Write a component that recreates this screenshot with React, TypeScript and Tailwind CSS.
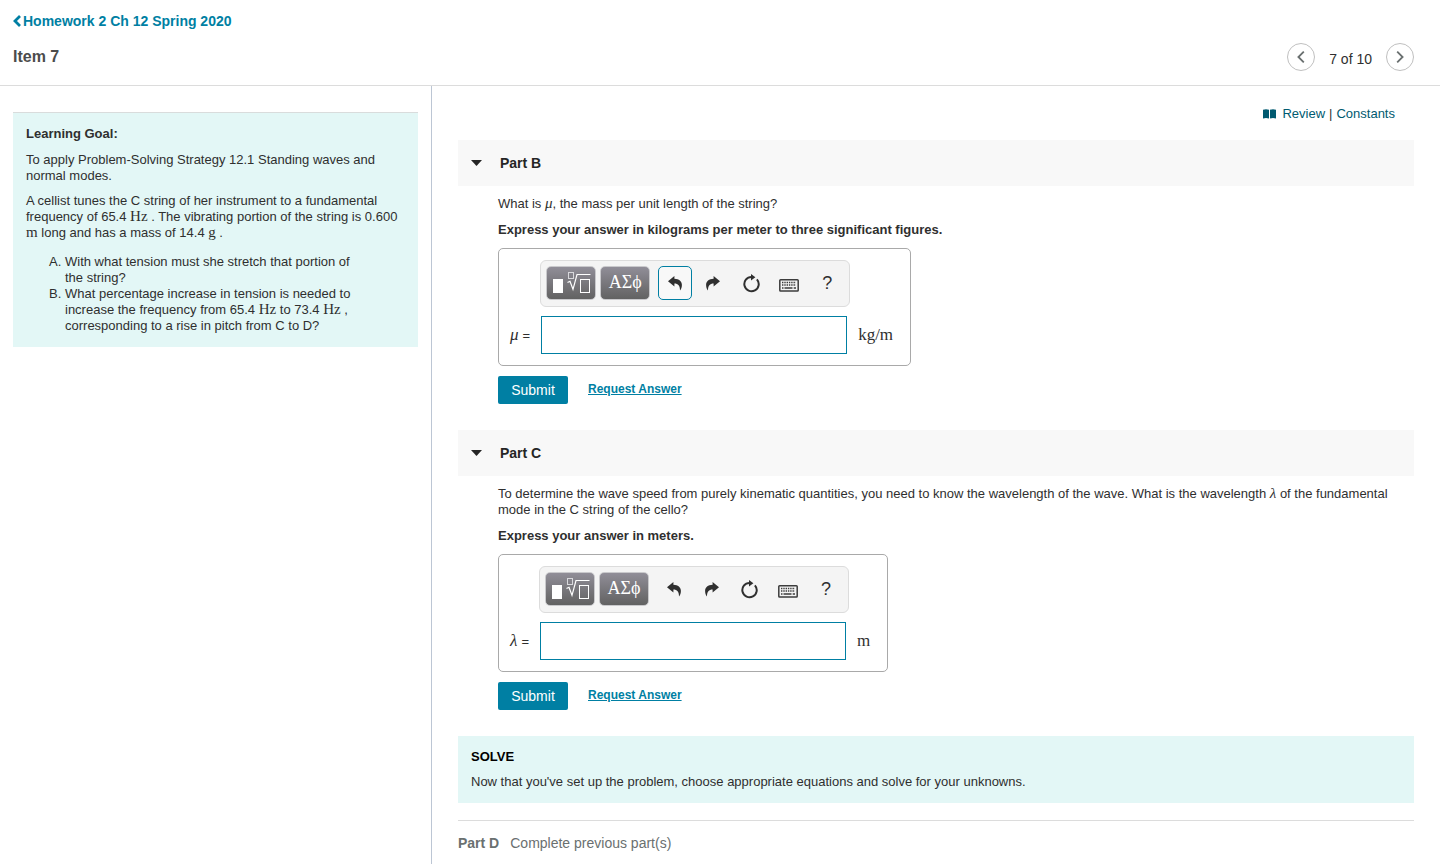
import React from 'react';
import clsx from 'clsx';

function ReplyArrow({ flipped = false }: { flipped?: boolean }) {
  return (
    <svg viewBox="0 0 14 15" className={clsx('h-[15px] w-[14px]', flipped && '-scale-x-100')} fill="#2f2f2f" aria-hidden="true">
      <path d="M0 5.2 6.4 0v2.800C11 2.800 13.900 5.600 13.900 9c0 2.300-.8 4.200-1.900 5.600C12.200 10 10 7.600 6.400 7.600v2.800z" />
    </svg>
  );
}

function ResetIcon() {
  return (
    <svg viewBox="0 0 17 19" className="h-[19px] w-[17px]" aria-hidden="true">
      <path d="M13.900 5.300A7.200 7.200 0 1 1 8.500 2.900" fill="none" stroke="#2f2f2f" strokeWidth="2" />
      <path d="M8 0 12.400 3.200 8 6.400z" fill="#2f2f2f" />
    </svg>
  );
}

function KeyboardIcon() {
  return (
    <svg viewBox="0 0 20 13" className="h-[13px] w-5" fill="none" stroke="#3c3c3c" aria-hidden="true">
      <rect x="0.8" y="0.8" width="18.400" height="11.200" rx="0.8" strokeWidth="1.500" />
      <path d="M3 3.500h14M3 6h14" strokeWidth="1.400" strokeDasharray="1.400 0.900" />
      <path d="M3 9h1.500M5.500 9h8M14.700 9H17" strokeWidth="1.400" />
    </svg>
  );
}

function TemplateIcon() {
  return (
    <svg viewBox="1 1 48 32" className="h-full w-full" fill="none" stroke="#fff" aria-hidden="true">
      <rect x="7" y="13" width="10" height="14" fill="#fff" stroke="none" />
      <rect x="22.500" y="6.500" width="5" height="6" stroke="#d8d8dc" />
      <path d="M21.500 16.500l2.500-1.200 3 8L31 8.500h13.500" strokeWidth="1.200" />
      <rect x="34.500" y="13.500" width="9" height="13" />
    </svg>
  );
}

function BookIcon() {
  return (
    <svg viewBox="0 0 13 10" className="h-[10px] w-[13px]" fill="#005a70" aria-hidden="true">
      <path d="M0 .7Q3 -.3 6 .7V9.500Q3 8.500 0 9.500zM7 .7Q10-.3 13 .7V9.500Q10 8.500 7 9.500z" />
    </svg>
  );
}

function Unit({ children }: { children: React.ReactNode }) {
  return <span className="font-['Liberation_Serif',serif] text-[15px] leading-none">{children}</span>;
}

function MathVar({ children }: { children: React.ReactNode }) {
  return <i className="font-['Liberation_Serif',serif] text-[15px] leading-none">{children}</i>;
}

const darkButton =
  "h-[34px] w-[50px] rounded-[5px] border border-[#c9c9cc] bg-linear-to-b from-[#918e98] to-[#626262] font-['Liberation_Serif',serif] text-lg leading-none text-white";
const toolButton = 'flex h-[34px] w-[34px] items-center justify-center rounded-[5px] border';

function Toolbar({ undoFocused }: { undoFocused?: boolean }) {
  return (
    <div className="flex gap-1 rounded-md border border-[#dcdcdc] bg-[#f4f4f4] px-[5px] pt-[5px] pb-[6px]">
      <button type="button" aria-label="Templates" className={darkButton}>
        <TemplateIcon />
      </button>
      <button type="button" aria-label="Symbols" className={clsx(darkButton, 'pb-0.5')}>
        ΑΣϕ
      </button>
      <button
        type="button"
        aria-label="Undo"
        className={clsx(toolButton, 'ml-1', undoFocused ? 'border-[#007fa3] bg-[#f8f8f8]' : 'border-transparent')}
      >
        <ReplyArrow />
      </button>
      <button type="button" aria-label="Redo" className={clsx(toolButton, 'border-transparent')}>
        <ReplyArrow flipped />
      </button>
      <button type="button" aria-label="Reset" className={clsx(toolButton, 'border-transparent')}>
        <ResetIcon />
      </button>
      <button type="button" aria-label="Keyboard shortcuts" className={clsx(toolButton, 'border-transparent pt-1')}>
        <KeyboardIcon />
      </button>
      <button type="button" aria-label="Help" className={clsx(toolButton, 'border-transparent text-lg')}>
        ?
      </button>
    </div>
  );
}

interface AnswerProps {
  id: string;
  symbol: string;
  unit: string;
  undoFocused?: boolean;
}

function AnswerForm({ id, symbol, unit, undoFocused }: AnswerProps) {
  return (
    <form onSubmit={(e) => e.preventDefault()}>
      <div className="grid w-fit grid-cols-[auto_auto_auto] items-center gap-y-[9px] rounded-[5px] border border-[#a9a9a9] py-[11px] pr-[17px] pl-[11px]">
        <div className="col-start-2">
          <Toolbar undoFocused={undoFocused} />
        </div>
        <label htmlFor={id} className="col-start-1 row-start-2 flex items-baseline gap-1 pr-[10px]">
          <i className="font-['Liberation_Serif',serif] text-[17px]">{symbol}</i> =
        </label>
        <div className="row-start-2 px-px">
          <input
            id={id}
            type="text"
            className="block h-[38px] w-[306px] border border-[#007fa3] bg-white px-2 text-base outline-none"
          />
        </div>
        <span className="row-start-2 pl-2 font-['Liberation_Serif',serif] text-[17px]">{unit}</span>
      </div>
      <div className="mt-[10px] flex items-center gap-5">
        <button type="submit" className="h-7 w-[70px] rounded-xs bg-[#007fa3] text-sm text-white">
          Submit
        </button>
        <a href="#request" className="pb-0.5 text-xs font-bold text-[#007fa3] underline">
          Request Answer
        </a>
      </div>
    </form>
  );
}

function Part({ title, children }: { title: string; children: React.ReactNode }) {
  return (
    <section className="mb-[26px]">
      <h2>
        <button type="button" className="flex h-[46px] w-full items-center gap-[18px] bg-[#f8f8f8] px-[13px] text-sm font-bold text-[#252525]">
          <svg viewBox="0 0 11 6" className="h-[6px] w-[11px]" fill="#252525" aria-hidden="true">
            <path d="M0 0h11L5.500 6z" />
          </svg>
          {title}
        </button>
      </h2>
      <div className="space-y-[10px] pt-[10px] pl-10">{children}</div>
    </section>
  );
}

const pagerButton = 'flex h-7 w-7 items-center justify-center rounded-full border border-[#c0c0c0]';

export default function App() {
  return (
    <div className="flex min-h-screen flex-col bg-white font-['Liberation_Sans',Arial,sans-serif] text-[13px] leading-4 text-[#2f2f2f]">
      <header className="flex items-end justify-between border-b border-[#dcdcdc] pr-[26px] pl-[13px]">
        <div className="pt-[11px] pb-[18px]">
          <a href="#assignment" className="flex items-center gap-0.5 text-sm font-bold text-[#007fa3]">
            <svg viewBox="0 0 8 12" className="h-3 w-2" fill="none" stroke="currentColor" strokeWidth="2.800" aria-hidden="true">
              <path d="M7 1 2 6l5 5" />
            </svg>
            Homework 2 Ch 12 Spring 2020
          </a>
          <h1 className="mt-4 text-base leading-5 font-bold text-[#4c4c4c]">Item 7</h1>
        </div>
        <nav className="flex items-center gap-[14px] pb-[14px] text-sm" aria-label="Items">
          <button type="button" aria-label="Previous item" className={pagerButton}>
            <svg viewBox="0 0 8 12" className="h-3 w-2" fill="none" stroke="#6a7070" strokeWidth="1.800" aria-hidden="true">
              <path d="M6.800 .6 1.400 6l5.400 5.400" />
            </svg>
          </button>
          <span className="pt-1">7 of 10</span>
          <button type="button" aria-label="Next item" className={pagerButton}>
            <svg viewBox="0 0 8 12" className="h-3 w-2" fill="none" stroke="#6a7070" strokeWidth="1.800" aria-hidden="true">
              <path d="M1.200 .6 6.600 6l-5.400 5.400" />
            </svg>
          </button>
        </nav>
      </header>

      <div className="flex flex-1">
        <aside className="w-[30%] shrink-0 border-r border-[#bcc6d4] px-[13px] pt-[26px]">
          <div className="border-t border-[#d9dcdc] bg-[#e3f7f6] p-[13px]">
            <h2 className="font-bold">Learning Goal:</h2>
            <p className="mt-[10px]">To apply Problem-Solving Strategy 12.1 Standing waves and normal modes.</p>
            <p className="mt-[9px]">
              A cellist tunes the C string of her instrument to a fundamental frequency of 65.4 <Unit>Hz</Unit> . The
              vibrating portion of the string is 0.600 <Unit>m</Unit> long and has a mass of 14.4 <Unit>g</Unit> .
            </p>
            <ol className="mt-[13px] list-[upper-alpha] px-[39px]">
              <li>With what tension must she stretch that portion of the string?</li>
              <li>
                What percentage increase in tension is needed to increase the frequency from 65.4 <Unit>Hz</Unit> to
                73.4 <Unit>Hz</Unit> , corresponding to a rise in pitch from C to D?
              </li>
            </ol>
          </div>
        </aside>

        <main className="min-w-0 flex-1 px-[26px] pt-5">
          <div className="mb-[18px] flex items-center justify-end gap-1 pr-[19px] text-[#005a70]">
            <span className="pr-0.5">
              <BookIcon />
            </span>
            <a href="#review">Review</a>
            <span className="text-[#2f2f2f]">|</span>
            <a href="#constants">Constants</a>
          </div>

          <Part title="Part B">
            <p>
              What is <MathVar>μ</MathVar>, the mass per unit length of the string?
            </p>
            <p className="font-bold">Express your answer in kilograms per meter to three significant figures.</p>
            <AnswerForm id="answer-b" symbol="μ" unit="kg/m" undoFocused />
          </Part>

          <Part title="Part C">
            <p>
              To determine the wave speed from purely kinematic quantities, you need to know the wavelength of the wave.
              What is the wavelength <MathVar>λ</MathVar> of the fundamental mode in the C string of the cello?
            </p>
            <p className="font-bold">Express your answer in meters.</p>
            <AnswerForm id="answer-c" symbol="λ" unit="m" />
          </Part>

          <section className="bg-[#e3f7f6] p-[13px]">
            <h2 className="font-bold text-black">SOLVE</h2>
            <p className="mt-[9px]">
              Now that you've set up the problem, choose appropriate equations and solve for your unknowns.
            </p>
          </section>

          <section className="mt-[17px] flex gap-[11px] border-t border-[#dcdcdc] pt-3 text-sm text-[#6a7070]">
            <h2 className="font-bold">Part D</h2>
            <p>Complete previous part(s)</p>
          </section>
        </main>
      </div>
    </div>
  );
}
